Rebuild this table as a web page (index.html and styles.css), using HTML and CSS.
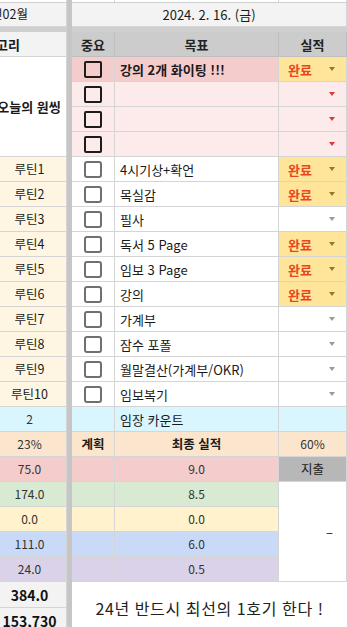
FILE: index.html
```html
<!DOCTYPE html>
<html lang="ko">
<head>
<meta charset="utf-8">
<link rel="stylesheet" href="styles.css">
</head>
<body>
<div class="sheet">
  <div class="vbar"></div>
  <div class="hband"></div>

  <!-- top strip -->
  <div class="c strip"></div>
  <div class="c strip"></div>
  <div class="c strip"></div>
  <div class="c strip"></div>

  <!-- date row -->
  <div class="c lgray cut cut-month">2024년02월</div>
  <div class="c lgray date span3">2024. 2. 16. (금)</div>

  <!-- header -->
  <div class="c lgray cut cut-cat b">카테고리</div>
  <div class="c head">중요</div>
  <div class="c head">목표</div>
  <div class="c head">실적</div>

  <!-- one thing -->
  <div class="c onething span4r b">오늘의 원씽</div>
  <div class="c pink"><span class="cb dark"></span></div>
  <div class="c pink goal b">강의 2개 화이팅 !!!</div>
  <div class="c yellow res"><span class="done">완료</span><span class="arr olive"></span></div>

  <div class="c lpink"><span class="cb dark"></span></div>
  <div class="c lpink goal"></div>
  <div class="c lpink res end"><span class="arr red"></span></div>

  <div class="c lpink"><span class="cb dark"></span></div>
  <div class="c lpink goal"></div>
  <div class="c lpink res end"><span class="arr red"></span></div>

  <div class="c lpink"><span class="cb dark"></span></div>
  <div class="c lpink goal"></div>
  <div class="c lpink res end"><span class="arr red"></span></div>

  <!-- routines -->
  <div class="c cream lc">루틴1</div>
  <div class="c"><span class="cb"></span></div>
  <div class="c goal">4시기상+확언</div>
  <div class="c yellow res"><span class="done">완료</span><span class="arr olive"></span></div>

  <div class="c cream lc">루틴2</div>
  <div class="c"><span class="cb"></span></div>
  <div class="c goal">목실감</div>
  <div class="c yellow res"><span class="done">완료</span><span class="arr olive"></span></div>

  <div class="c cream lc">루틴3</div>
  <div class="c"><span class="cb"></span></div>
  <div class="c goal">필사</div>
  <div class="c res end"><span class="arr gray"></span></div>

  <div class="c cream lc">루틴4</div>
  <div class="c"><span class="cb"></span></div>
  <div class="c goal">독서 5 Page</div>
  <div class="c yellow res"><span class="done">완료</span><span class="arr olive"></span></div>

  <div class="c cream lc">루틴5</div>
  <div class="c"><span class="cb"></span></div>
  <div class="c goal">임보 3 Page</div>
  <div class="c yellow res"><span class="done">완료</span><span class="arr olive"></span></div>

  <div class="c cream lc">루틴6</div>
  <div class="c"><span class="cb"></span></div>
  <div class="c goal">강의</div>
  <div class="c yellow res"><span class="done">완료</span><span class="arr olive"></span></div>

  <div class="c cream lc">루틴7</div>
  <div class="c"><span class="cb"></span></div>
  <div class="c goal">가계부</div>
  <div class="c res end"><span class="arr gray"></span></div>

  <div class="c cream lc">루틴8</div>
  <div class="c"><span class="cb"></span></div>
  <div class="c goal">잠수 포폴</div>
  <div class="c res end"><span class="arr gray"></span></div>

  <div class="c cream lc">루틴9</div>
  <div class="c"><span class="cb"></span></div>
  <div class="c goal">월말결산(가계부/OKR)</div>
  <div class="c res end"><span class="arr gray"></span></div>

  <div class="c cream lc">루틴10</div>
  <div class="c"><span class="cb"></span></div>
  <div class="c goal">임보복기</div>
  <div class="c res end"><span class="arr gray"></span></div>

  <!-- count -->
  <div class="c cyan lc num">2</div>
  <div class="c cyan"></div>
  <div class="c cyan goal">임장 카운트</div>
  <div class="c cyan"></div>

  <!-- plan -->
  <div class="c peach lc num">23%</div>
  <div class="c peach b">계획</div>
  <div class="c peach b">최종 실적</div>
  <div class="c peach num">60%</div>

  <!-- colored values -->
  <div class="c red1 lc num">75.0</div>
  <div class="c red1"></div>
  <div class="c red1 num">9.0</div>
  <div class="c dgray">지출</div>

  <div class="c green lc num">174.0</div>
  <div class="c green"></div>
  <div class="c green num">8.5</div>
  <div class="c white span4r dash">–</div>

  <div class="c lyel lc num">0.0</div>
  <div class="c lyel"></div>
  <div class="c lyel num">0.0</div>

  <div class="c blue lc num">111.0</div>
  <div class="c blue"></div>
  <div class="c blue num">6.0</div>

  <div class="c purple lc num">24.0</div>
  <div class="c purple"></div>
  <div class="c purple num">0.5</div>

  <!-- totals -->
  <div class="c lgray lc tot">384.0</div>
  <div class="c white msg span3 span2r">24년 반드시 최선의 1호기 한다 !</div>
  <div class="c lgray lc tot">153,730</div>
</div>
</body>
</html>
```

FILE: styles.css
```css
html, body {
  margin: 0;
  padding: 0;
  overflow: hidden;
  background: #ffffff;
}

.sheet {
  display: grid;
  grid-template-columns: 67px 5px 43px 164px 68px;
  grid-template-rows: 3px 24px 5px 25px repeat(21, 25px) 26px 26px;
  width: 347px;
  font-family: "Noto Sans CJK KR", "Noto Sans", sans-serif;
  font-size: 12.5px;
  color: #1a1a1a;
}

.vbar {
  grid-column: 2;
  grid-row: 1 / -1;
  background: #c6c6c6;
  z-index: 2;
}

.hband {
  grid-column: 1 / -1;
  grid-row: 3;
  background: #cfcfcf;
  z-index: 1;
}

.c {
  box-sizing: border-box;
  border-right: 1px solid #d5d5d5;
  border-bottom: 1px solid #d5d5d5;
  display: flex;
  align-items: center;
  justify-content: center;
  white-space: nowrap;
  min-width: 0;
  line-height: 1;
  background: #ffffff;
}

.b { font-weight: 700; }

.strip { background: #ffffff; border-bottom-color: #cfcfcf; }

.span3 { grid-column: span 3; }
.span4r { grid-row: span 4; }
.span2r { grid-row: span 2; }

.lgray { background: #f3f3f3; }
.date { font-size: 13px; }

.cut { justify-content: flex-end; }
.cut-month { padding-right: 38px; font-size: 12.5px; }
.cut-cat { padding-right: 46px; font-size: 13px; }

.head {
  background: #cccccc;
  border-right-color: #bfbfbf;
  border-bottom-color: #bfbfbf;
  font-weight: 700;
  font-size: 13px;
  color: #222;
}

.onething {
  justify-content: center;
  padding-right: 8px;
  font-size: 13px;
  background: #ffffff;
}

.lc { padding-right: 7px; }

.goal {
  justify-content: flex-start;
  padding-left: 5px;
  font-size: 13px;
}

.res {
  justify-content: space-between;
  padding-left: 9px;
  padding-right: 11px;
}
.res.end { justify-content: flex-end; }

.done {
  color: #e8471d;
  font-weight: 700;
  font-size: 13px;
}

.arr {
  width: 0;
  height: 0;
  border-left: 3.5px solid transparent;
  border-right: 3.5px solid transparent;
  border-top: 4px solid #999;
}
.arr.olive { border-top-color: #8f7a26; }
.arr.red { border-top-color: #e2363b; }
.arr.gray { border-top-color: #9a9a9a; }

.cb {
  box-sizing: border-box;
  width: 18px;
  height: 17px;
  border: 2px solid #707070;
  border-radius: 3px;
}
.cb.dark {
  border: 2.5px solid #1c1c1c;
  border-radius: 2px;
}

.pink { background: #f4cccc; }
.lpink { background: #fdeaea; }
.yellow { background: #ffe599; }
.cream { background: #fef6e3; }
.cyan { background: #d9f5fd; }
.peach { background: #fce5cd; }
.red1 { background: #f4cccc; }
.green { background: #d9ead3; }
.lyel { background: #fff2cc; }
.blue { background: #c9daf8; }
.purple { background: #d9d2e9; }
.dgray { background: #b7b7b7; font-size: 12.5px; }
.white { background: #ffffff; }

.num { font-size: 12px; color: #333; }

.dash {
  justify-content: flex-end;
  padding-right: 13px;
  font-size: 13px;
}

.tot {
  font-weight: 700;
  font-size: 14px;
  color: #111;
}

.msg {
  font-family: "Noto Sans CJK KR", "Noto Sans", sans-serif;
  font-size: 16px;
  letter-spacing: 0.6px;
  color: #222;
  border-right: none;
  border-bottom: none;
}
```
